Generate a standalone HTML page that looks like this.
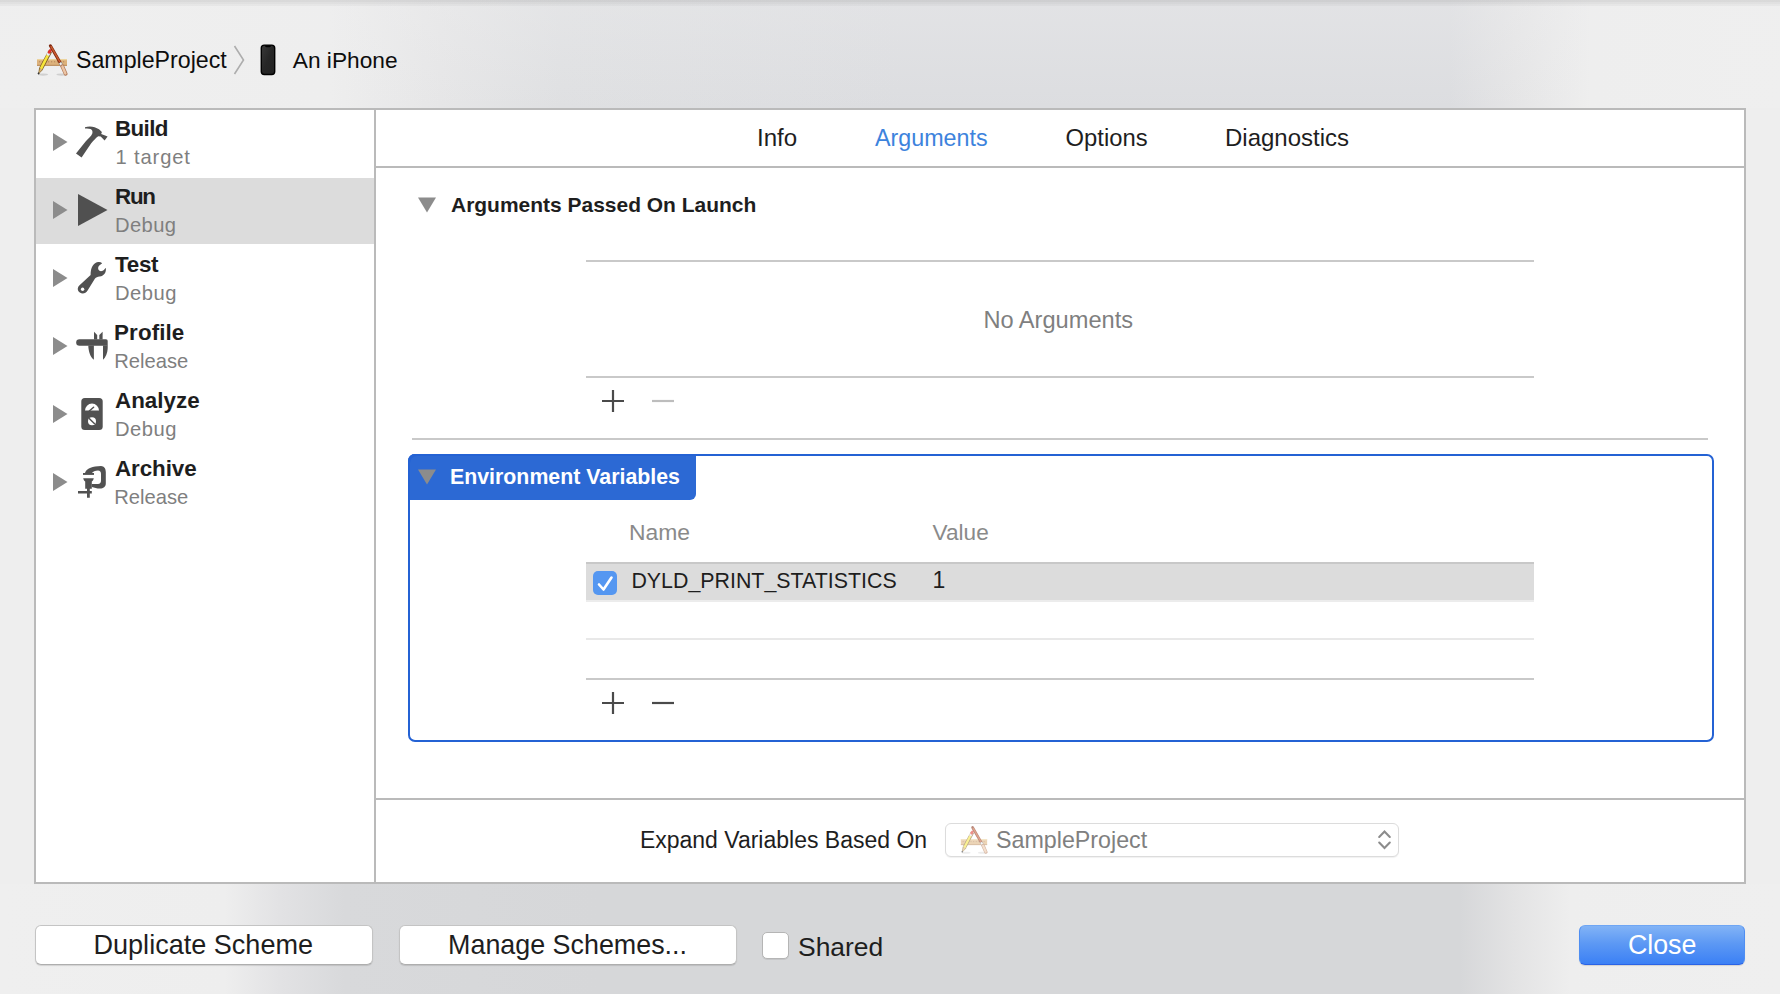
<!DOCTYPE html>
<html><head><meta charset="utf-8"><style>
html,body{margin:0;padding:0;width:1780px;height:994px;overflow:hidden;}
body{position:relative;font-family:"Liberation Sans",sans-serif;
background:linear-gradient(90deg,#efefef 0px,#eeeeee 225px,#e2e2e4 280px,#d8d9db 345px,#d6d7d9 600px,#d6d7d9 1460px,#e3e3e4 1515px,#eeeeee 1570px,#efefef 1780px);}
.t{position:absolute;white-space:nowrap;}
.a{position:absolute;}
</style></head><body>
<div class="a" style="left:0;top:0;width:1780px;height:108px;background:linear-gradient(90deg,#efefef 0px,#eeeeee 330px,#e6e6e7 440px,#dfe0e2 560px,#dcdde0 900px,#dcdde0 1450px,#e5e5e6 1515px,#eeeeee 1590px,#efefef 1780px);"></div>
<div class="a" style="left:0;top:0;width:1780px;height:108px;background:linear-gradient(180deg,rgba(238,238,239,.35) 0px,rgba(238,238,239,0) 108px);"></div>
<div class="a" style="left:0;top:0;width:1780px;height:6px;background:linear-gradient(180deg,rgba(0,0,0,.09) 0px,rgba(0,0,0,.09) 2px,rgba(0,0,0,.06) 2px,rgba(0,0,0,.06) 4px,rgba(0,0,0,.035) 4px,rgba(0,0,0,.03) 6px);"></div>
<div class="a" style="left:0;top:108px;width:34px;height:776px;background:#eeeeee"></div>
<div class="a" style="left:1746px;top:108px;width:34px;height:776px;background:#eeeeee"></div>

<div class="a" style="left:36px;top:44px;"><svg width="32" height="32" viewBox="0 0 32 32">
<ellipse cx="7" cy="30.6" rx="5" ry="1.1" fill="#000" opacity=".13"/><ellipse cx="25.5" cy="30.6" rx="5" ry="1.1" fill="#000" opacity=".13"/>
<rect x="1" y="15" width="30" height="6.8" fill="#ddb27c"/><rect x="1" y="15" width="30" height="1.2" fill="#ecd39c"/><rect x="1" y="20.8" width="30" height="1" fill="#b98b5a"/>
<path d="M3 17.8h26" stroke="#b3865a" stroke-width="1" stroke-dasharray="1.2 1.8"/>
<path d="M5.2 24.2 L14.2 7.4" stroke="#7b5a22" stroke-width="4"/><path d="M3.2 23.3 L7.2 25.4 L2.2 30.4Z" fill="#7b5a22"/>
<path d="M4.9 24.8 L11.9 11.2" stroke="#f7e63c" stroke-width="2.6"/>
<path d="M3.9 24.3 L6.4 25.6 L2.8 29.4Z" fill="#d9b474"/>
<path d="M2.2 30.2 L3 28.6" stroke="#333" stroke-width="1.6"/>
<path d="M11.7 11.3 L13.1 8.5" stroke="#eeeeee" stroke-width="3"/>
<path d="M13.2 8.3 L14.3 6.6" stroke="#e2322a" stroke-width="2.9" stroke-linecap="round"/>
<path d="M14.4 1.7 L24.2 18.8" stroke="#7e2810" stroke-width="3" stroke-linecap="round"/>
<path d="M14.8 2.2 L24 18.2" stroke="#c95a2e" stroke-width="1.5"/>
<path d="M24.1 18.7 L26.3 22.3" stroke="#8a8a8a" stroke-width="3.2"/>
<path d="M24.1 18.7 L26.3 22.3" stroke="#f2f2f2" stroke-width="2"/>
<path d="M26.3 22.3 L29.6 29.8" stroke="#b27a5a" stroke-width="3.8" stroke-linecap="round"/>
<path d="M26.4 22.6 L29.4 29.4" stroke="#ecc5a5" stroke-width="2.4" stroke-linecap="round"/>
</svg></div>
<svg class="a" style="left:230px;top:42px" width="20" height="36"><path d="M4.5 4 L13.5 18 L4.5 32" fill="none" stroke="#adadad" stroke-width="1.6"/></svg>
<svg class="a" style="left:258px;top:43px" width="20" height="34"><defs><linearGradient id="ph" x1="0" y1="0" x2="1" y2="1"><stop offset="0" stop-color="#3a3a3a"/><stop offset=".5" stop-color="#262626"/><stop offset="1" stop-color="#222"/></linearGradient></defs><rect x="3.3" y="2.1" width="13.4" height="29.4" rx="3" fill="url(#ph)" stroke="#000" stroke-width="1.4"/><path d="M7 2.6 H13 C13 3.8 12.3 4.2 11.5 4.2 H8.5 C7.7 4.2 7 3.8 7 2.6Z" fill="#000"/></svg>

<div class="a" style="left:34px;top:108px;width:1712px;height:776px;box-sizing:border-box;border:2px solid #bababa;background:#fff"></div>
<div class="a" style="left:36px;top:178px;width:338px;height:66px;background:#dcdcdc"></div>
<div class="a" style="left:374px;top:110px;width:2px;height:772px;background:#bababa"></div>
<div class="a" style="left:376px;top:166px;width:1368px;height:2px;background:#bababa"></div>
<div class="a" style="left:376px;top:798px;width:1368px;height:2px;background:#bababa"></div>

<svg class="a" style="left:52px;top:132px" width="17" height="20"><path d="M1 1 L15.5 10 L1 19Z" fill="#8c8c8c"/></svg>
<svg class="a" style="left:52px;top:200px" width="17" height="20"><path d="M1 1 L15.5 10 L1 19Z" fill="#8c8c8c"/></svg>
<svg class="a" style="left:52px;top:268px" width="17" height="20"><path d="M1 1 L15.5 10 L1 19Z" fill="#8c8c8c"/></svg>
<svg class="a" style="left:52px;top:336px" width="17" height="20"><path d="M1 1 L15.5 10 L1 19Z" fill="#8c8c8c"/></svg>
<svg class="a" style="left:52px;top:404px" width="17" height="20"><path d="M1 1 L15.5 10 L1 19Z" fill="#8c8c8c"/></svg>
<svg class="a" style="left:52px;top:472px" width="17" height="20"><path d="M1 1 L15.5 10 L1 19Z" fill="#8c8c8c"/></svg>
<svg class="a" style="left:72px;top:122px" width="40" height="40" viewBox="0 0 40 40">
<path d="M13 5.3 C17 3.6 23 4.3 27 7.3 L29.9 9.9 L29.2 12.1 L35.6 14.6 L32.6 18.4 L28.7 14.4 L26.2 14.3 C24.8 15.2 23 17 19.2 21.3 L9.6 35.6 L4 31.5 L13.6 19.6 C15.8 17 19.5 14 20.3 11.5 C20.9 9.6 20.2 7.8 18.6 7.1 C16.8 6.4 14.8 6.4 13 6.6 Z" fill="#515151"/>
</svg>
<svg class="a" style="left:77px;top:193px" width="32" height="34"><path d="M1 1 L30.5 17 L1 33Z" fill="#505050"/></svg>
<svg class="a" style="left:72px;top:258px" width="40" height="40" viewBox="0 0 40 40">
<path d="M18.6 17 C18.6 10 21 5 26 4.1 C27.6 3.8 29 4.2 30.2 5.2 L27.3 7.6 C25.6 9 25.8 11.8 27.5 12.8 C29 13.7 31 13 32.3 11.5 L33.8 9.8 C34.5 14 32.5 18 27.5 18.6 C25.5 18.9 24 19.6 23 20.6 L15.6 32.6 C13.9 35.4 10.5 36.4 7.8 34.6 C5.2 32.8 5.2 29.5 7.3 27.5 Z" fill="#515151"/>
<circle cx="10.6" cy="31.3" r="1.7" fill="#fff"/>
</svg>
<svg class="a" style="left:72px;top:326px" width="40" height="40" viewBox="0 0 40 40">
<path d="M7.5 13.2 H34 Q35.7 13.2 35.7 14.9 V19.8 H7.5 A3.3 3.3 0 0 1 7.5 13.2Z" fill="#515151"/>
<path d="M16.3 19.5 H21.9 V33.8 C18.6 31.5 16.5 26 16.3 19.5Z" fill="#515151"/>
<path d="M31 19.5 H35.7 V22 C35.5 27 33.6 31.5 31 33.8Z" fill="#515151"/>
<path d="M22 5.8 L25.2 9 V13.5 H22Z" fill="#515151"/>
<path d="M30.6 5.8 V13.5 H27.3 V9Z" fill="#515151"/>
</svg>
<svg class="a" style="left:81px;top:398px" width="22" height="33" viewBox="0 0 22 33">
<rect x="0.3" y="0" width="21.4" height="32" rx="3.5" fill="#515151"/>
<path d="M4 12.6 A7 7 0 0 1 18 12.6Z" fill="#fff"/>
<path d="M8.3 13 L12.6 9.3" stroke="#515151" stroke-width="1.5" stroke-linecap="round"/>
<circle cx="11" cy="23.2" r="4" fill="#fff"/>
<path d="M8 20.3 L13.8 26.1" stroke="#515151" stroke-width="1.4"/>
</svg>
<svg class="a" style="left:72px;top:462px" width="40" height="40" viewBox="0 0 40 40">
<path d="M13 11 C14 7.5 18 4.6 26 4.2 L29 4.1 C32 4.2 33.8 6.5 33.8 10 V21.5 C33.8 25 31 26.8 27.5 26.6 C25 26.4 22.5 25.4 19.8 24.9 V22 H26 C28 22 29 20.5 29 18.5 V12 C29 10 28 8.6 26 8.6 C23 8.6 21 9.5 20 11 Z" fill="#515151"/>
<path d="M11 11 H22 V12.9 H11Z" fill="#515151"/>
<path d="M11.2 16.2 H21.8 C21.5 17.8 20.8 18.8 19.8 19.4 V26.8 H17.8 V29 H19.8 V31.6 H17.8 V35.8 H15 V31.6 H6 V29 H15 V26.8 H13.2 V19.4 C12.2 18.8 11.5 17.8 11.2 16.2Z" fill="#515151"/>
</svg>

<!-- args section -->
<svg class="a" style="left:417px;top:196px" width="20" height="18"><path d="M1 1.5 H19 L10 16.5Z" fill="#8c8c8c"/></svg>
<div class="a" style="left:586px;top:260px;width:948px;height:2px;background:#c9c9c9"></div>
<div class="a" style="left:586px;top:376px;width:948px;height:2px;background:#c9c9c9"></div>
<svg class="a" style="left:600px;top:388px" width="26" height="26"><path d="M13 2V24M2 13H24" stroke="#4a4a4a" stroke-width="2.2"/></svg>
<svg class="a" style="left:650px;top:388px" width="26" height="26"><path d="M2 13H24" stroke="#bdbdbd" stroke-width="2.2"/></svg>
<div class="a" style="left:412px;top:438px;width:1296px;height:2px;background:#c9c9c9"></div>

<!-- env box -->
<div class="a" style="left:408px;top:454px;width:1306px;height:288px;box-sizing:border-box;border:2px solid #2462d4;border-radius:7px;"></div>
<div class="a" style="left:408px;top:454px;width:288px;height:46px;background:#2c69d4;border-radius:7px 0 6px 0;box-shadow:inset 2px 2px 0 #2462d4"></div>
<svg class="a" style="left:417px;top:468px" width="20" height="18"><path d="M1 1.5 H19 L10 16.5Z" fill="#8c8c8c"/></svg>
<div class="a" style="left:586px;top:562px;width:948px;height:38px;background:#dcdcdc;box-shadow:inset 0 2px 0 #c8c8c8"></div>
<div class="a" style="left:586px;top:600px;width:948px;height:2px;background:#ececec"></div>
<div class="a" style="left:586px;top:638px;width:948px;height:2px;background:#e8e8e8"></div>
<div class="a" style="left:586px;top:678px;width:948px;height:2px;background:#c9c9c9"></div>
<div class="a" style="left:593px;top:571px;width:24px;height:24px;border-radius:5px;background:#5597f1"></div>
<svg class="a" style="left:593px;top:571px" width="24" height="24"><path d="M6 13.5 L10.5 18.5 L18.5 6.5" fill="none" stroke="#fff" stroke-width="2.6" stroke-linecap="round" stroke-linejoin="round"/></svg>
<svg class="a" style="left:600px;top:690px" width="26" height="26"><path d="M13 2V24M2 13H24" stroke="#4a4a4a" stroke-width="2.2"/></svg>
<svg class="a" style="left:650px;top:690px" width="26" height="26"><path d="M2 13H24" stroke="#4a4a4a" stroke-width="2.2"/></svg>

<!-- popup -->
<div class="a" style="left:945px;top:823px;width:454px;height:34px;box-sizing:border-box;border:1px solid #dcdcdc;border-radius:6px;background:#fff;box-shadow:0 1px 1px rgba(0,0,0,.06)"></div>
<div class="a" style="left:959.5px;top:825.5px;opacity:.55"><svg width="28" height="28" viewBox="0 0 32 32">
<ellipse cx="7" cy="30.6" rx="5" ry="1.1" fill="#000" opacity=".13"/><ellipse cx="25.5" cy="30.6" rx="5" ry="1.1" fill="#000" opacity=".13"/>
<rect x="1" y="15" width="30" height="6.8" fill="#ddb27c"/><rect x="1" y="15" width="30" height="1.2" fill="#ecd39c"/><rect x="1" y="20.8" width="30" height="1" fill="#b98b5a"/>
<path d="M3 17.8h26" stroke="#b3865a" stroke-width="1" stroke-dasharray="1.2 1.8"/>
<path d="M5.2 24.2 L14.2 7.4" stroke="#7b5a22" stroke-width="4"/><path d="M3.2 23.3 L7.2 25.4 L2.2 30.4Z" fill="#7b5a22"/>
<path d="M4.9 24.8 L11.9 11.2" stroke="#f7e63c" stroke-width="2.6"/>
<path d="M3.9 24.3 L6.4 25.6 L2.8 29.4Z" fill="#d9b474"/>
<path d="M2.2 30.2 L3 28.6" stroke="#333" stroke-width="1.6"/>
<path d="M11.7 11.3 L13.1 8.5" stroke="#eeeeee" stroke-width="3"/>
<path d="M13.2 8.3 L14.3 6.6" stroke="#e2322a" stroke-width="2.9" stroke-linecap="round"/>
<path d="M14.4 1.7 L24.2 18.8" stroke="#7e2810" stroke-width="3" stroke-linecap="round"/>
<path d="M14.8 2.2 L24 18.2" stroke="#c95a2e" stroke-width="1.5"/>
<path d="M24.1 18.7 L26.3 22.3" stroke="#8a8a8a" stroke-width="3.2"/>
<path d="M24.1 18.7 L26.3 22.3" stroke="#f2f2f2" stroke-width="2"/>
<path d="M26.3 22.3 L29.6 29.8" stroke="#b27a5a" stroke-width="3.8" stroke-linecap="round"/>
<path d="M26.4 22.6 L29.4 29.4" stroke="#ecc5a5" stroke-width="2.4" stroke-linecap="round"/>
</svg></div>
<svg class="a" style="left:1374px;top:826px" width="22" height="28"><path d="M5.2 10.9 L10.5 5.6 L15.8 10.9 M5.2 16.6 L10.5 21.9 L15.8 16.6" fill="none" stroke="#8c8c8c" stroke-width="2.1" stroke-linecap="round" stroke-linejoin="miter"/></svg>

<!-- bottom buttons -->
<div class="a" style="left:35px;top:925px;width:338px;height:40px;box-sizing:border-box;border:1px solid #c4c4c4;border-bottom-color:#aeaeae;border-radius:6px;background:#fff;box-shadow:0 1px 1px rgba(0,0,0,.12)"></div>
<div class="a" style="left:399px;top:925px;width:338px;height:40px;box-sizing:border-box;border:1px solid #c4c4c4;border-bottom-color:#aeaeae;border-radius:6px;background:#fff;box-shadow:0 1px 1px rgba(0,0,0,.12)"></div>
<div class="a" style="left:762px;top:932px;width:27px;height:27px;box-sizing:border-box;border:1px solid #b5b5b5;border-radius:5px;background:#fff;box-shadow:0 1px 0 rgba(0,0,0,.08)"></div>
<div class="a" style="left:1579px;top:925px;width:166px;height:40px;box-sizing:border-box;border:1px solid #4f8ef2;border-top-color:#6fa6f4;border-bottom-color:#2a63e6;border-radius:6px;background:linear-gradient(180deg,#82b3f6 0%,#5d99f4 45%,#3b80f5 100%);box-shadow:0 1px 1px rgba(0,0,0,.12)"></div>

<div class="t" style="left:76px;top:49px;font-size:23.2px;line-height:23.2px;font-weight:normal;color:#0d0d0d">SampleProject</div>
<div class="t" style="left:292.8px;top:49px;font-size:22.69px;line-height:22.69px;font-weight:normal;color:#0d0d0d">An iPhone</div>
<div class="t" style="left:115px;top:118px;font-size:22.4px;line-height:22.4px;font-weight:bold;color:#1e1e1e;letter-spacing:-0.625px">Build</div>
<div class="t" style="left:115.5px;top:147px;font-size:20.2px;line-height:20.2px;font-weight:normal;color:#7f7f7f;letter-spacing:0.859px">1 target</div>
<div class="t" style="left:115px;top:186px;font-size:22.4px;line-height:22.4px;font-weight:bold;color:#1e1e1e;letter-spacing:-1.25px">Run</div>
<div class="t" style="left:115px;top:215px;font-size:20.2px;line-height:20.2px;font-weight:normal;color:#7f7f7f;letter-spacing:0.375px">Debug</div>
<div class="t" style="left:115.1px;top:254px;font-size:22.4px;line-height:22.4px;font-weight:bold;color:#1e1e1e;letter-spacing:-0.333px">Test</div>
<div class="t" style="left:115px;top:283px;font-size:20.2px;line-height:20.2px;font-weight:normal;color:#7f7f7f;letter-spacing:0.5px">Debug</div>
<div class="t" style="left:114.1px;top:322px;font-size:22.4px;line-height:22.4px;font-weight:bold;color:#1e1e1e;letter-spacing:0.084px">Profile</div>
<div class="t" style="left:114.2px;top:351px;font-size:20.2px;line-height:20.2px;font-weight:normal;color:#7f7f7f;letter-spacing:0.001px">Release</div>
<div class="t" style="left:115px;top:390px;font-size:22.4px;line-height:22.4px;font-weight:bold;color:#1e1e1e;letter-spacing:0.001px">Analyze</div>
<div class="t" style="left:115px;top:419px;font-size:20.2px;line-height:20.2px;font-weight:normal;color:#7f7f7f;letter-spacing:0.5px">Debug</div>
<div class="t" style="left:115px;top:458px;font-size:22.4px;line-height:22.4px;font-weight:bold;color:#1e1e1e;letter-spacing:-0.082px">Archive</div>
<div class="t" style="left:114.2px;top:487px;font-size:20.2px;line-height:20.2px;font-weight:normal;color:#7f7f7f">Release</div>
<div class="t" style="left:757px;top:126px;font-size:24.12px;line-height:24.12px;font-weight:normal;color:#1e1e1e">Info</div>
<div class="t" style="left:875px;top:127px;font-size:23.31px;line-height:23.31px;font-weight:normal;color:#3d83dd">Arguments</div>
<div class="t" style="left:1065.6px;top:126px;font-size:23.79px;line-height:23.79px;font-weight:normal;color:#1e1e1e">Options</div>
<div class="t" style="left:1225px;top:126px;font-size:23.99px;line-height:23.99px;font-weight:normal;color:#1e1e1e">Diagnostics</div>
<div class="t" style="left:451px;top:195px;font-size:20.97px;line-height:20.97px;font-weight:bold;color:#1e1e1e">Arguments Passed On Launch</div>
<div class="t" style="left:983.4px;top:309px;font-size:23.64px;line-height:23.64px;font-weight:normal;color:#7f7f7f">No Arguments</div>
<div class="t" style="left:450px;top:467px;font-size:21.34px;line-height:21.34px;font-weight:bold;color:#ffffff">Environment Variables</div>
<div class="t" style="left:629px;top:521px;font-size:22.9px;line-height:22.9px;font-weight:normal;color:#8a8a8a">Name</div>
<div class="t" style="left:932.6px;top:522px;font-size:22.61px;line-height:22.61px;font-weight:normal;color:#8a8a8a">Value</div>
<div class="t" style="left:631.4px;top:571px;font-size:21.39px;line-height:21.39px;font-weight:normal;color:#1e1e1e">DYLD_PRINT_STATISTICS</div>
<div class="t" style="left:932.6px;top:569px;font-size:23px;line-height:23px;font-weight:normal;color:#1e1e1e">1</div>
<div class="t" style="left:639.9px;top:829px;font-size:23.01px;line-height:23.01px;font-weight:normal;color:#1e1e1e">Expand Variables Based On</div>
<div class="t" style="left:996px;top:829px;font-size:23.26px;line-height:23.26px;font-weight:normal;color:#808080">SampleProject</div>
<div class="t" style="left:93.5px;top:932px;font-size:27.05px;line-height:27.05px;font-weight:normal;color:#1e1e1e">Duplicate Scheme</div>
<div class="t" style="left:448.1px;top:932px;font-size:26.86px;line-height:26.86px;font-weight:normal;color:#1e1e1e">Manage Schemes...</div>
<div class="t" style="left:798px;top:934px;font-size:26.44px;line-height:26.44px;font-weight:normal;color:#1e1e1e">Shared</div>
<div class="t" style="left:1627.9px;top:932px;font-size:26.81px;line-height:26.81px;font-weight:normal;color:#ffffff">Close</div>
</body></html>
